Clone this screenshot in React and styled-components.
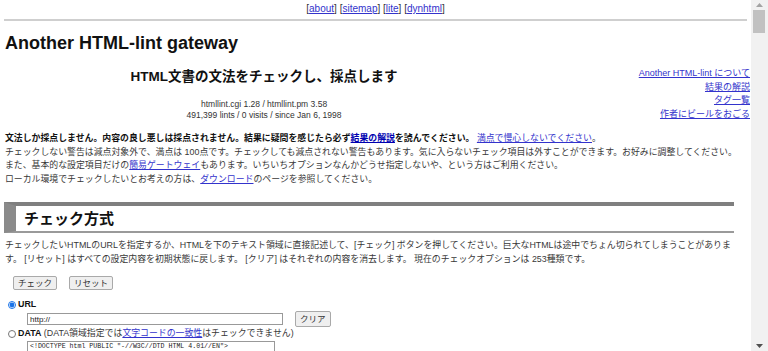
import styled, { createGlobalStyle } from "styled-components";

const GlobalStyle = createGlobalStyle`
  body {
    margin: 0;
    background: #fff;
    color: #383838;
    font-family: "Liberation Sans", Arial, "Noto Sans CJK JP", sans-serif;
    font-size: 8.9px;
    line-height: 13.5px;
  }
  a {
    color: #3333cc;
  }
`;

const Shell = styled.div`
  display: flex;
  align-items: flex-start;
`;

const Page = styled.main`
  flex: 1;
  min-width: 0;
  padding: 2px 4px 4px 4px;
`;

const Track = styled.div`
  width: 17px;
  height: 100vh;
  flex-shrink: 0;
  display: flex;
  flex-direction: column;
  align-items: center;
  background: #f1f1f1;
`;

const Arrow = styled.div`
  height: 10px;
  display: flex;
  align-items: center;
  justify-content: center;
  svg {
    display: block;
  }
`;

const Thumb = styled.div`
  width: 12px;
  height: 23px;
  margin-left: -1px;
  background: #c1c1c1;
`;

const Spring = styled.div`
  flex: 1;
`;

const Nav = styled.div`
  text-align: center;
  font-size: 10px;
  line-height: 13px;
  color: #333;
`;

const Rule = styled.hr`
  margin: 4px 0 0 0;
  border: none;
  border-top: 2px solid #cfcfcf;
`;

const Title = styled.h1`
  margin: 10px 0 0 1px;
  font-size: 18px;
  line-height: 24px;
  color: #111;
`;

const Header = styled.div`
  display: grid;
  grid-template-columns: 7fr 3fr;
  margin-top: 12px;
`;

const Lead = styled.div`
  text-align: center;
`;

const Subtitle = styled.h2`
  margin: 0;
  font-size: 13.5px;
  line-height: 20px;
  color: #111;
`;

const Version = styled.p`
  margin: 12px 0 0 0;
  font-size: 8.5px;
  line-height: 11px;
  color: #333;
`;

const SideLinks = styled.div`
  display: flex;
  flex-direction: column;
  align-items: flex-end;
  margin-right: -3px;
  font-size: 9px;
  line-height: 13.5px;
`;

const Para = styled.p`
  margin: ${(p) => p.$top || 0}px 0 0 1px;
`;

const Strong = styled.b`
  color: #111;
  a {
    color: #0000b0;
  }
`;

const Section = styled.h2`
  margin: 16px 13px 0 0;
  border-top: 4px solid #7f7f7f;
  border-left: 12px solid #8a8a8a;
  border-bottom: 2px solid #9a9a9a;
  padding: 0 8px;
  font-size: 15px;
  line-height: 25px;
  color: #111;
`;

const ButtonRow = styled.div`
  display: flex;
  gap: 12px;
  margin: 10px 0 0 9px;
`;

const Button = styled.button`
  font-family: inherit;
  font-size: 8.5px;
  line-height: 10px;
  padding: 1px 4px;
  height: ${(p) => p.$h || 14}px;
  background: #efefef;
  border: 1px solid #a9a9a9;
  border-radius: 2px;
  color: #333;
`;

const Option = styled.label`
  display: flex;
  align-items: center;
  gap: 2px;
  margin: ${(p) => p.$top || 0}px 0 0 4px;
  line-height: 13px;
  b {
    color: #111;
  }
`;

const Radio = styled.input`
  width: 8px;
  height: 8px;
  margin: 0;
  accent-color: #1a73e8;
`;

const Field = styled.div`
  display: flex;
  align-items: center;
  gap: 12px;
  margin-left: 23px;
`;

const TextInput = styled.input`
  width: 256px;
  height: 12px;
  box-sizing: border-box;
  border: 1px solid #999;
  font-family: "Liberation Sans", Arial, sans-serif;
  font-size: 8px;
  padding: 0 2px;
  color: #222;
`;

const Source = styled.textarea`
  display: block;
  margin: 1px 0 0 23px;
  width: 248px;
  height: 40px;
  box-sizing: border-box;
  border: 1px solid #999;
  padding: 1px 2px;
  font-family: "Liberation Mono", monospace;
  font-size: 6.6px;
  line-height: 8px;
  resize: none;
  color: #222;
  overflow: hidden;
`;

function Scrollbar() {
  return (
    <Track>
      <Arrow>
        <svg width="7" height="4" viewBox="0 0 7 4">
          <path d="M0 4 L3.5 0 L7 4 Z" fill="#a3a3a3" />
        </svg>
      </Arrow>
      <Thumb />
      <Spring />
      <Arrow>
        <svg width="7" height="4" viewBox="0 0 7 4">
          <path d="M0 0 L7 0 L3.5 4 Z" fill="#505050" />
        </svg>
      </Arrow>
    </Track>
  );
}

export default function App() {
  return (
    <Shell>
      <GlobalStyle />
      <Page>
        <Nav>
          [<a href="#">about</a>] [<a href="#">sitemap</a>] [<a href="#">lite</a>] [
          <a href="#">dynhtml</a>]
        </Nav>
        <Rule />
        <Title>Another HTML-lint gateway</Title>
        <Header>
          <Lead>
            <Subtitle>HTML文書の文法をチェックし、採点します</Subtitle>
            <Version>
              htmllint.cgi 1.28 / htmllint.pm 3.58
              <br />
              491,399 lints / 0 visits / since Jan 6, 1998
            </Version>
          </Lead>
          <SideLinks>
            <a href="#">Another HTML-lint について</a>
            <a href="#">結果の解説</a>
            <a href="#">タグ一覧</a>
            <a href="#">作者にビールをおごる</a>
          </SideLinks>
        </Header>
        <Para $top={11}>
          <Strong>
            文法しか採点しません。内容の良し悪しは採点されません。結果に疑問を感じたら必ず
            <a href="#">結果の解説</a>を読んでください。
          </Strong>{" "}
          <a href="#">満点で慢心しないでください</a>。
          <br />
          チェックしない警告は減点対象外で、満点は
          100点です。チェックしても減点されない警告もあります。気に入らないチェック項目は外すことができます。お好みに調整してください。
          <br />
          また、基本的な設定項目だけの<a href="#">簡易ゲートウェイ</a>
          もあります。いちいちオプションなんかどうせ指定しないや、という方はご利用ください。
          <br />
          ローカル環境でチェックしたいとお考えの方は、<a href="#">ダウンロード</a>
          のページを参照してください。
        </Para>
        <Section>チェック方式</Section>
        <Para $top={6}>
          {"チェックしたいHTMLのURLを指定するか、HTMLを下のテキスト領域に直接記述して、[チェック] ボタンを押してください。巨大なHTMLは途中でちょん切られてしまうことがあります。 [リセット] はすべての設定内容を初期状態に戻します。 [クリア] はそれぞれの内容を消去します。 現在のチェックオプションは 253種類です。"}
        </Para>
        <ButtonRow>
          <Button>チェック</Button>
          <Button>リセット</Button>
        </ButtonRow>
        <Option $top={8}>
          <Radio type="radio" name="mode" defaultChecked />
          <b>URL</b>
        </Option>
        <Field>
          <TextInput defaultValue="http://" />
          <Button $h={16}>クリア</Button>
        </Field>
        <Option>
          <Radio type="radio" name="mode" />
          <span>
            <b>DATA</b> (DATA領域指定では<a href="#">文字コードの一致性</a>
            はチェックできません)
          </span>
        </Option>
        <Source
          defaultValue={'<!DOCTYPE html PUBLIC "-//W3C//DTD HTML 4.01//EN">\n<html>\n<head>\n<title></title>\n</head>'}
        />
      </Page>
      <Scrollbar />
    </Shell>
  );
}
